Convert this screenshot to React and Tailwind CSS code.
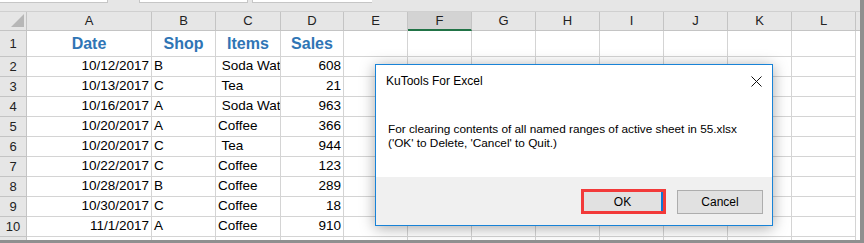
import React from "react"

const cols = ["A", "B", "C", "D", "E", "F", "G", "H", "I", "J", "K", "L"]
const widths = ["w-[125px]", "w-[64px]", "w-[65px]", "w-[63px]", "w-[64px]", "w-[64px]", "w-[64px]", "w-[64px]", "w-[64px]", "w-[64px]", "w-[64px]", "w-[64px]"]

// cell text as it shows on screen (long items are cut by the next column)
const rows = [
  ["10/12/2017", "B", " Soda Wat", 608],
  ["10/13/2017", "C", " Tea", 21],
  ["10/16/2017", "A", " Soda Wat", 963],
  ["10/20/2017", "A", "Coffee", 366],
  ["10/20/2017", "C", " Tea", 944],
  ["10/22/2017", "C", "Coffee", 123],
  ["10/28/2017", "B", "Coffee", 289],
  ["10/30/2017", "C", "Coffee", 18],
  ["11/1/2017", "A", "Coffee", 910],
]

function RowHead({ children, h }) {
  return (
    <div className={`w-[27px] shrink-0 ${h} bg-[#e6e6e6] border-r border-b border-[#c4c4c4] flex items-center justify-center text-[13px] text-[#222]`}>
      {children}
    </div>
  )
}

function Cell({ w, h, children, align = "left" }) {
  const a = align === "right" ? "justify-end pr-[2px]" : align === "center" ? "justify-center" : "justify-start pl-[2px]"
  return (
    <div className={`${w} ${h} shrink-0 border-r border-b border-[#d4d4d4] flex items-center overflow-hidden whitespace-pre ${a}`}>
      {children}
    </div>
  )
}

export default function App() {
  return (
    <div className="w-[864px] h-[243px] bg-[#8f8f8f] overflow-hidden" style={{ fontFamily: "'Liberation Sans', Arial, sans-serif" }}>
      <div className="relative w-[860px] h-[240px] bg-white overflow-hidden">
        {/* formula bar edge */}
        <div className="h-[12px] bg-[#e6e6e6] border-b border-[#d0d0d0] flex gap-0">
          <div className="w-[108px] h-[3px] bg-white border-b border-r border-[#c6c6c6]" />
          <div className="ml-[31px] w-[109px] h-[3px] bg-white border-b border-x border-[#c6c6c6]" />
          <div className="ml-[4px] w-[120px] h-[3px] bg-white border-b border-l border-[#c6c6c6]" />
        </div>

        {/* column headers */}
        <div className="flex h-[19px]">
          <div className="w-[27px] shrink-0 bg-[#e6e6e6] border-r border-b border-[#c4c4c4] relative">
            <div className="absolute right-[2px] bottom-[3px] w-0 h-0 border-l-[13px] border-l-transparent border-b-[13px] border-b-[#b7b7b7]" />
          </div>
          {cols.map((c, i) => (
            <div
              key={c}
              className={`${widths[i]} shrink-0 flex items-center justify-center text-[13px] text-[#222] border-r border-[#c4c4c4] ${c === "F" ? "bg-[#d3d3d3] border-b-2 border-b-[#217346]" : "bg-[#e6e6e6] border-b border-b-[#c4c4c4]"}`}
            >
              {c}
            </div>
          ))}
          <div className="flex-1 bg-[#e6e6e6] border-b border-[#c4c4c4]" />
        </div>

        {/* row 1 */}
        <div className="flex">
          <RowHead h="h-[26px]">1</RowHead>
          {["Date", "Shop", "Items", "Sales"].map((t, i) => (
            <Cell key={t} w={widths[i]} h="h-[26px]" align="center">
              <span className="font-bold text-[16px] text-[#2f75b5] pt-[1px]">{t}</span>
            </Cell>
          ))}
          {widths.slice(4).map((w, i) => (
            <Cell key={i} w={w} h="h-[26px]" />
          ))}
        </div>

        {/* data rows */}
        {rows.map((r, ri) => (
          <div key={ri} className="flex text-[13.5px] text-black">
            <RowHead h="h-[20px]">{ri + 2}</RowHead>
            <Cell w={widths[0]} h="h-[20px]" align="right">{r[0]}</Cell>
            <Cell w={widths[1]} h="h-[20px]">{r[1]}</Cell>
            <Cell w={widths[2]} h="h-[20px]">{r[2]}</Cell>
            <Cell w={widths[3]} h="h-[20px]" align="right">{r[3]}</Cell>
            {widths.slice(4).map((w, i) => (
              <Cell key={i} w={w} h="h-[20px]" />
            ))}
          </div>
        ))}
        <div className="flex">
          <RowHead h="h-[20px]" />
          {widths.map((w, i) => (
            <Cell key={i} w={w} h="h-[20px]" />
          ))}
        </div>

        {/* dialog */}
        <div className="absolute left-[375px] top-[64px] w-[398px] h-[162px] bg-white border border-[#1883d7] shadow-[0_2px_14px_rgba(0,0,0,0.35)] flex flex-col text-[12px] text-black">
          <div className="h-[30px] flex items-center justify-between pl-[10px] pr-[10px] pt-[2px]">
            <span>KuTools For Excel</span>
            <svg width="11" height="11" viewBox="0 0 11 11" className="mt-[1px]">
              <path d="M0.5 0.5 L10.5 10.5 M10.5 0.5 L0.5 10.5" stroke="#111" strokeWidth="1" />
            </svg>
          </div>
          <div className="flex-1 pl-[12px] pt-[27px] leading-[14px] text-[11.8px]">
            <div>For clearing contents of all named ranges of active sheet in 55.xlsx</div>
            <div>('OK' to Delete, 'Cancel' to Quit.)</div>
          </div>
          <div className="h-[48px] bg-[#f0f0f0] flex items-center justify-end gap-[11px] pr-[9px] pt-[1px]">
            <div className="w-[85px] h-[25px] border-[3px] border-[#f23a3a] flex">
              <div className="flex-1 bg-[#e1e1e1] border-r-2 border-[#0f78d7] flex items-center justify-center">OK</div>
            </div>
            <div className="w-[86px] h-[24px] bg-[#e1e1e1] border border-[#adadad] flex items-center justify-center">Cancel</div>
          </div>
        </div>
      </div>
    </div>
  )
}
